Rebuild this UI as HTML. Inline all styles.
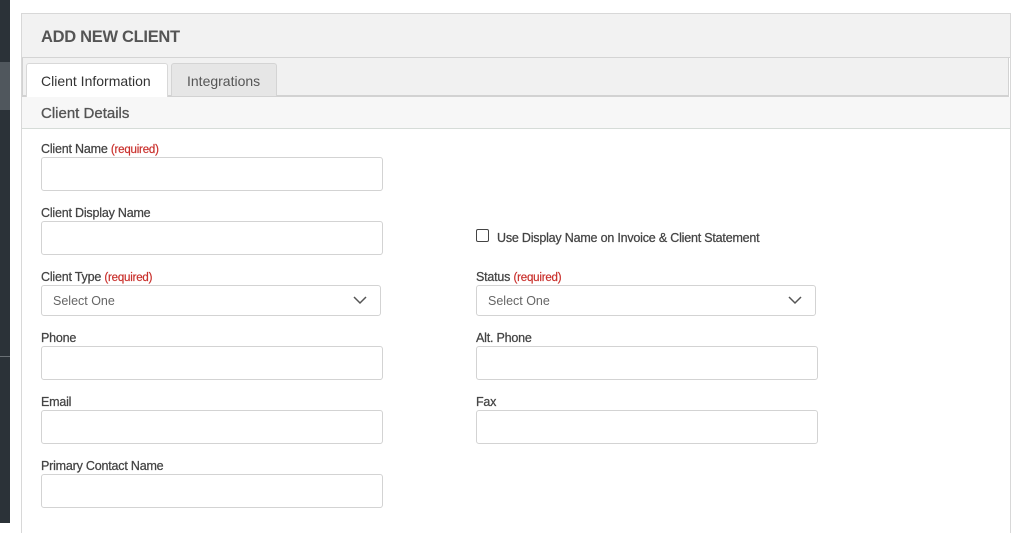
<!DOCTYPE html>
<html><head><style>
*{box-sizing:border-box;margin:0;padding:0}
body{width:1017px;height:523px;overflow:hidden;background:#fff;font-family:"Liberation Sans",sans-serif;position:relative;color:#555}
.a{position:absolute}
.lbl{position:absolute;font-size:12.5px;color:#444;letter-spacing:-0.2px;-webkit-text-stroke:0.25px #444}
.req{color:#c9302c;-webkit-text-stroke:0.2px #c9302c}
.inp{position:absolute;height:34px;border:1px solid #d3d3d3;border-radius:3px;background:#fff}
.sel{position:absolute;height:31px;border:1px solid #d3d3d3;border-radius:3px;background:#fff;font-size:12.5px;color:#666;padding:8px 0 0 11px}
.sel svg{position:absolute;right:13px;top:10px}
</style></head><body>
<div class="a" style="left:0;top:0;width:10px;height:523px;background:#2b3238"></div>
<div class="a" style="left:0;top:62px;width:10px;height:48px;background:#50575d"></div>
<div class="a" style="left:0;top:356px;width:10px;height:1px;background:#6a7075"></div>

<div class="a" style="left:21px;top:13px;width:990px;height:520px;border:1px solid #d8d8d8;border-bottom:none;background:#fff"></div>
<div class="a" style="left:22px;top:14px;width:988px;height:44px;background:#f2f2f2;border-bottom:1px solid #d4d4d4"></div>
<div class="a" style="left:41px;top:28px;font-size:16.5px;color:#555;letter-spacing:-0.3px;font-weight:bold">ADD NEW CLIENT</div>
<div class="a" style="left:22px;top:58px;width:987px;height:39px;background:#f1f1f1;border:1px solid #d2d2d2;border-top:none;border-bottom:2px solid #d2d2d2"></div>
<div class="a" style="left:26px;top:63px;width:142px;height:35px;background:#fff;border:1px solid #d8d8d8;border-bottom:none;border-radius:3px 3px 0 0;font-size:14px;color:#333;padding:9px 0 0 14px">Client Information</div>
<div class="a" style="left:171px;top:63px;width:106px;height:33px;background:#e6e6e6;border:1px solid #d4d4d4;border-bottom:none;border-radius:3px 3px 0 0;font-size:14px;color:#555;padding:9px 0 0 15px">Integrations</div>
<div class="a" style="left:22px;top:97px;width:988px;height:32px;background:#f7f7f7;border-bottom:1px solid #d6dcd8"></div>
<div class="a" style="left:41px;top:105px;font-size:15px;color:#555;-webkit-text-stroke:0.3px #555">Client Details</div>

<div class="lbl" style="left:41px;top:142px">Client Name <span class="req" style="font-size:11.5px">(required)</span></div>
<div class="inp" style="left:41px;top:157px;width:342px"></div>
<div class="lbl" style="left:41px;top:206px">Client Display Name</div>
<div class="inp" style="left:41px;top:221px;width:342px"></div>
<div class="a" style="left:476px;top:229px;width:13px;height:13px;border:1px solid #444;border-radius:2px"></div>
<div class="lbl" style="left:497px;top:231px;color:#444">Use Display Name on Invoice &amp; Client Statement</div>

<div class="lbl" style="left:41px;top:270px">Client Type <span class="req" style="font-size:11.5px">(required)</span></div>
<div class="sel" style="left:41px;top:285px;width:340px">Select One<svg width="14" height="9" viewBox="0 0 14 9"><path d="M1 1l6 6 6-6" fill="none" stroke="#555" stroke-width="1.5"/></svg></div>
<div class="lbl" style="left:476px;top:270px">Status <span class="req" style="font-size:11.5px">(required)</span></div>
<div class="sel" style="left:476px;top:285px;width:340px">Select One<svg width="14" height="9" viewBox="0 0 14 9"><path d="M1 1l6 6 6-6" fill="none" stroke="#555" stroke-width="1.5"/></svg></div>

<div class="lbl" style="left:41px;top:331px">Phone</div>
<div class="inp" style="left:41px;top:346px;width:342px"></div>
<div class="lbl" style="left:476px;top:331px">Alt. Phone</div>
<div class="inp" style="left:476px;top:346px;width:342px"></div>

<div class="lbl" style="left:41px;top:395px">Email</div>
<div class="inp" style="left:41px;top:410px;width:342px"></div>
<div class="lbl" style="left:476px;top:395px">Fax</div>
<div class="inp" style="left:476px;top:410px;width:342px"></div>

<div class="lbl" style="left:41px;top:459px">Primary Contact Name</div>
<div class="inp" style="left:41px;top:474px;width:342px"></div>
</body></html>
